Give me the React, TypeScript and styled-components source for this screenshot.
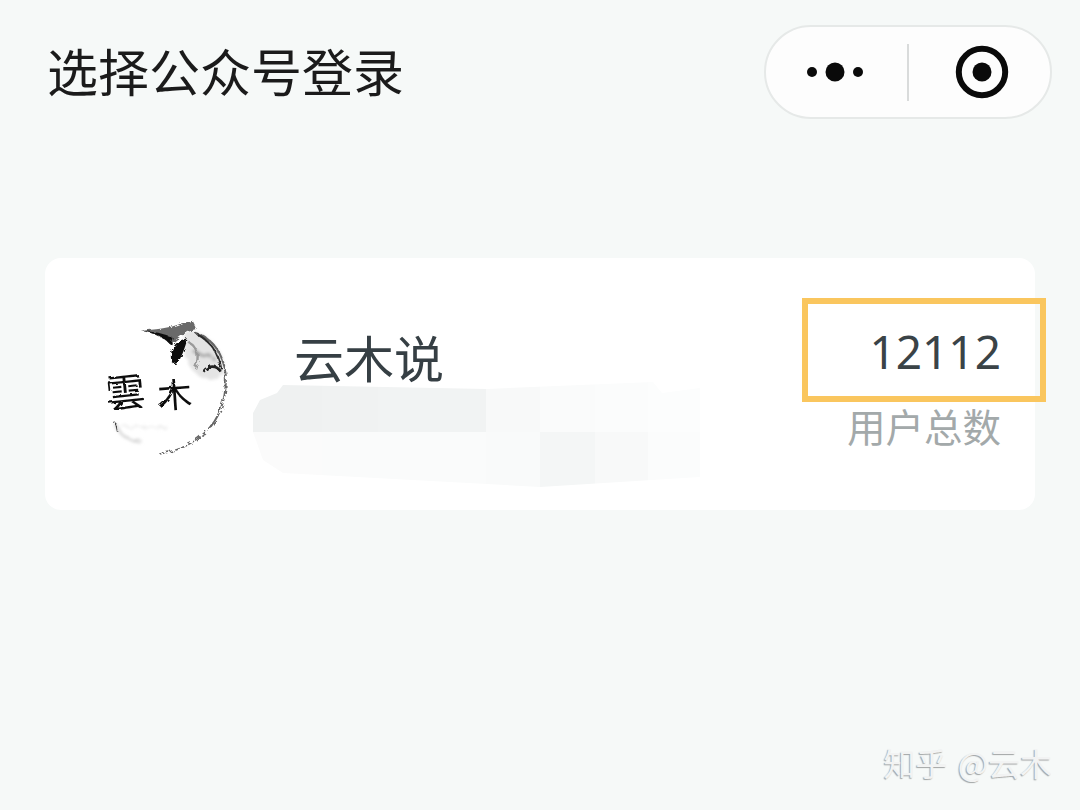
import styled, { createGlobalStyle } from 'styled-components';

// STYLES
const GlobalStyle = createGlobalStyle`
  html, body {
    margin: 0;
    padding: 0;
    background-color: #f6f9f8;
  }
  body {
    font-family: "Noto Sans CJK SC", "Noto Sans", sans-serif;
  }
`;

const Page = styled.div`
  position: relative;
  width: 1080px;
  height: 810px;
  overflow: hidden;
  background-color: #f6f9f8;
`;

const Header = styled.header`
  display: flex;
  align-items: center;
  justify-content: space-between;
  padding: 25px 28px 0 47px;
`;

const Title = styled.h1`
  margin: 0;
  padding-bottom: 4px;
  font-size: 51px;
  line-height: 90px;
  font-weight: 400;
  color: #1b1b1b;
`;

const Capsule = styled.div`
  box-sizing: border-box;
  width: 288px;
  height: 94px;
  display: flex;
  align-items: center;
  background-color: #fdfdfd;
  border: 2px solid #e6e9e8;
  border-radius: 47px;
`;

const CapsuleSlot = styled.div`
  flex: 1;
  display: flex;
  align-items: center;
  justify-content: center;
`;

const CapsuleDivider = styled.div`
  width: 2px;
  height: 57px;
  background-color: #d9dbdb;
`;

const DotsIcon = styled.svg`
  margin-right: 3px;
`;

const RingIcon = styled.svg`
  margin-left: 5px;
`;

const Card = styled.section`
  box-sizing: border-box;
  height: 252px;
  margin: 139px 45px 0;
  padding-left: 55px;
  display: flex;
  align-items: flex-start;
  background-color: #fff;
  border-radius: 16px;
`;

const Logo = styled.svg`
  flex: none;
  width: 145px;
  height: 160px;
  margin-top: 57px;
`;

const Account = styled.div`
  flex: none;
  width: 450px;
  margin-left: 8px;
  margin-top: 63px;
`;

const AccountName = styled.div`
  font-size: 50px;
  line-height: 70px;
  color: #363f44;
  padding-left: 41px;
  position: relative;
  z-index: 1;
`;

const Smear = styled.div`
  width: 447px;
  height: 108px;
  margin-top: -9px;
  display: grid;
  grid-template-columns: 69px 56px 55px 53px 54px 55px 53px 52px;
  grid-template-rows: 50px 58px;
  clip-path: polygon(
    30px 3px, 234px 7px, 400px 0, 409px 11px, 447px 6px, 447px 95px, 287px 105px,
    30px 91px, 10px 78px, 0 50px, 0 31px, 7px 18px, 24px 11px
  );
`;

const SmearCell = styled.div<{ $shade: string }>`
  background-color: ${(props) => props.$shade};
`;

const Stat = styled.div`
  flex: none;
  width: 244px;
  margin-left: 99px;
  margin-top: 40px;
  margin-right: -11px;
`;

const Highlight = styled.div`
  box-sizing: border-box;
  height: 104px;
  padding: 2px 39px 0 0;
  display: flex;
  align-items: center;
  justify-content: flex-end;
  border: 6px solid #fac65e;
  font-family: "Noto Sans", sans-serif;
  font-size: 46px;
  color: #3a4347;
`;

const StatLabel = styled.div`
  padding-right: 45px;
  text-align: right;
  font-size: 38.5px;
  line-height: 46px;
  color: #a3a9aa;
`;

const Watermark = styled.div`
  position: absolute;
  right: 28px;
  bottom: 25px;
  font-size: 32px;
  line-height: 46px;
  word-spacing: 3px;
  white-space: pre;
  color: #f2f3f3;
  text-shadow: -1px 1px 1px #a2a5a5;
`;

const smearCells = [
  '#eff1f1', '#f0f2f2', '#f1f3f3', '#f1f3f3', '#f8f9f9', '#fafbfb', '#fbfcfc', '#fcfdfd',
  '#fbfbfb', '#fafbfb', '#fafbfb', '#fafbfb', '#f9fafa', '#f4f6f6', '#f8f9f9', '#fbfcfc',
];

function MoreDots() {
  return (
    <DotsIcon width="64" height="24" viewBox="0 0 64 24">
      <circle cx="9" cy="12" r="5" fill="#0a0a0a" />
      <circle cx="32" cy="12" r="9.5" fill="#0a0a0a" />
      <circle cx="55" cy="12" r="5" fill="#0a0a0a" />
    </DotsIcon>
  );
}

function CloseRing() {
  return (
    <RingIcon width="54" height="54" viewBox="0 0 54 54">
      <circle cx="27" cy="27" r="23.2" fill="none" stroke="#0a0a0a" strokeWidth="6" />
      <circle cx="27" cy="27" r="9.5" fill="#0a0a0a" />
    </RingIcon>
  );
}

function InkLogo() {
  return (
    <Logo viewBox="60 45 435 480" aria-label="云木">
      <defs>
        <filter id="ink" x="-20%" y="-20%" width="140%" height="140%">
          <feTurbulence type="fractalNoise" baseFrequency="0.07" numOctaves="3" seed="4" />
          <feDisplacementMap in="SourceGraphic" scale="16" />
          <feGaussianBlur stdDeviation="1.4" />
        </filter>
        <filter id="mist" x="-20%" y="-20%" width="140%" height="140%">
          <feTurbulence type="fractalNoise" baseFrequency="0.04" numOctaves="3" seed="9" />
          <feDisplacementMap in="SourceGraphic" scale="26" />
          <feGaussianBlur stdDeviation="5" />
        </filter>
        <filter id="brush" x="-10%" y="-10%" width="120%" height="120%">
          <feTurbulence type="fractalNoise" baseFrequency="0.05" numOctaves="2" seed="2" />
          <feDisplacementMap in="SourceGraphic" scale="8" />
          <feGaussianBlur stdDeviation="0.8" />
        </filter>
      </defs>
      <g filter="url(#mist)">
        <path d="M320 90C380 95 425 140 436 210C425 235 395 240 365 232C330 215 305 170 320 90Z" fill="#e4e4e4" />
        <path d="M340 150C360 170 385 165 400 175" fill="none" stroke="#aaa" strokeWidth="12" />
        <path d="M108 372C116 402 145 428 182 420" fill="none" stroke="#d8d8d8" strokeWidth="8" />
        <path d="M125 382C165 372 215 392 262 378" fill="none" stroke="#ececec" strokeWidth="6" />
      </g>
      <g filter="url(#ink)">
        <path d="M185 93C220 88 270 86 305 70L338 62L350 86C325 92 298 108 272 134C250 112 222 100 185 93Z" fill="#6a6a6a" />
        <path d="M190 94C220 98 250 112 272 134L278 112C250 100 220 94 190 94Z" fill="#111" />
        <path d="M304 120C276 132 264 168 280 192C298 196 308 160 324 114Z" fill="#0a0a0a" />
        <path d="M345 98C395 112 430 160 437 222C441 280 425 340 392 380" fill="none" stroke="#666" strokeWidth="6" />
        <path d="M350 102C385 120 415 155 423 205" fill="none" stroke="#2c2c2c" strokeWidth="7" />
        <path d="M325 125C350 140 362 165 345 205" fill="none" stroke="#9a9a9a" strokeWidth="7" />
        <path d="M370 215C385 195 410 195 422 215" fill="none" stroke="#222" strokeWidth="8" />
        <path d="M395 375C355 425 300 452 238 462" fill="none" stroke="#666" strokeWidth="5" strokeDasharray="20 4" />
        <path d="M105 368L110 392" fill="none" stroke="#444" strokeWidth="5" />
      </g>
      <g filter="url(#brush)" fill="#111">
        <text x="78" y="322" fontSize="118" fontWeight="400" transform="rotate(-6 130 280)">雲</text>
        <text x="232" y="322" fontSize="104" fontWeight="400" transform="rotate(-4 280 280)">木</text>
      </g>
    </Logo>
  );
}

export default function App() {
  return (
    <Page>
      <GlobalStyle />
      <Header>
        <Title>选择公众号登录</Title>
        <Capsule>
          <CapsuleSlot>
            <MoreDots />
          </CapsuleSlot>
          <CapsuleDivider />
          <CapsuleSlot>
            <CloseRing />
          </CapsuleSlot>
        </Capsule>
      </Header>
      <Card>
        <InkLogo />
        <Account>
          <AccountName>云木说</AccountName>
          <Smear>
            {smearCells.map((shade, index) => (
              <SmearCell key={index} $shade={shade} />
            ))}
          </Smear>
        </Account>
        <Stat>
          <Highlight>12112</Highlight>
          <StatLabel>用户总数</StatLabel>
        </Stat>
      </Card>
      <Watermark>知乎 @云木</Watermark>
    </Page>
  );
}
